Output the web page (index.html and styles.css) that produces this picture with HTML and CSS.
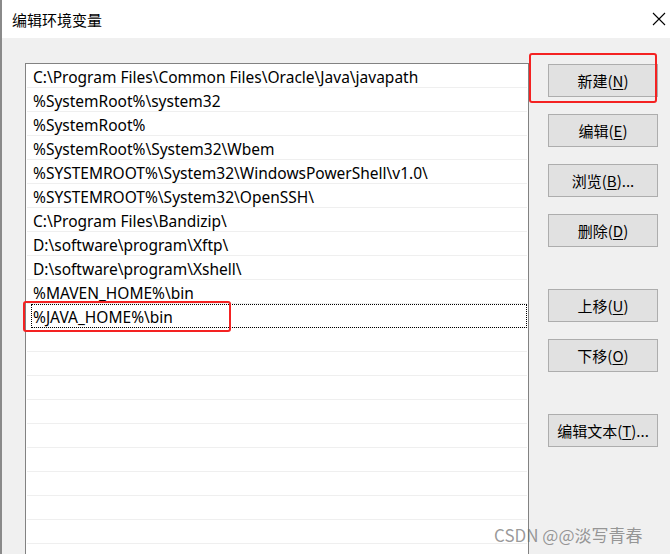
FILE: index.html
```html
<!DOCTYPE html>
<html>
  <head>
    <meta charset="UTF-8" />
    <title>编辑环境变量</title>
    <link rel="stylesheet" href="styles.css">
  </head>
  <body>
    <div class="dialog">
      <!-- 标题栏 -->
      <div class="title-bar">
        <span class="title">编辑环境变量</span>
        <svg class="close" width="14" height="14" viewBox="0 0 14 14">
          <path d="M1 1 L13 13 M13 1 L1 13" stroke="#000" stroke-width="1.1" fill="none" />
        </svg>
      </div>

      <div class="content">
        <div class="path-list">
          <div class="row">C:\Program Files\Common Files\Oracle\Java\javapath</div>
          <div class="row">%SystemRoot%\system32</div>
          <div class="row">%SystemRoot%</div>
          <div class="row">%SystemRoot%\System32\Wbem</div>
          <div class="row">%SYSTEMROOT%\System32\WindowsPowerShell\v1.0\</div>
          <div class="row">%SYSTEMROOT%\System32\OpenSSH\</div>
          <div class="row">C:\Program Files\Bandizip\</div>
          <div class="row">D:\software\program\Xftp\</div>
          <div class="row">D:\software\program\Xshell\</div>
          <div class="row">%MAVEN_HOME%\bin</div>
          <div class="row focused">%JAVA_HOME%\bin</div>
          <div class="row"></div>
          <div class="row"></div>
          <div class="row"></div>
          <div class="row"></div>
          <div class="row"></div>
          <div class="row"></div>
          <div class="row"></div>
          <div class="row"></div>
          <div class="row"></div>
        </div>

        <div class="buttons">
          <div class="btn">新建(<u>N</u>)</div>
          <div class="btn">编辑(<u>E</u>)</div>
          <div class="btn">浏览(<u>B</u>)...</div>
          <div class="btn">删除(<u>D</u>)</div>
          <div class="btn group">上移(<u>U</u>)</div>
          <div class="btn">下移(<u>O</u>)</div>
          <div class="btn group">编辑文本(<u>T</u>)...</div>
        </div>
      </div>
    </div>

    <!-- 标注框 -->
    <div class="mark mark-java"></div>
    <div class="mark mark-new"></div>

    <div class="watermark">CSDN @@淡写青春</div>
  </body>
</html>
```

FILE: styles.css
```css
body {
  margin: 0;
  padding: 0;
  overflow: hidden;
  background: #f0f0f0;
  font-family: "Noto Sans", "Noto Sans CJK SC", sans-serif;
  color: #000;
}

.dialog {
  width: 670px;
  height: 554px;
  border-left: 2px solid #8a8a8a;
  box-sizing: border-box;
}

.title-bar {
  height: 38px;
  background: #fff;
  display: flex;
  align-items: center;
  justify-content: space-between;
  padding: 0 4px 0 10px;
}

.title {
  font-family: "Noto Sans CJK SC", sans-serif;
  font-size: 15px;
}

.close {
  margin-top: -1px;
}

.content {
  display: flex;
  align-items: flex-start;
  padding: 25px 0 0 23px;
}

.path-list {
  width: 504px;
  height: 500px;
  box-sizing: border-box;
  background: #fff;
  border: 1px solid #828282;
  border-bottom: none;
  padding: 0 1px;
}

.row {
  height: 24px;
  box-sizing: border-box;
  border-bottom: 1px solid #efefef;
  padding: 2px 0 0 6px;
  font-size: 15.5px;
  line-height: 22px;
  white-space: nowrap;
}

.row.focused {
  outline: 1px dotted #000;
  outline-offset: -1px;
  margin-left: 4px;
  padding-left: 2px;
}

.buttons {
  display: flex;
  flex-direction: column;
  gap: 17px;
  margin-left: 19px;
  padding-top: 1px;
}

.btn {
  width: 110px;
  height: 33px;
  box-sizing: border-box;
  background: #e1e1e1;
  border: 1px solid #adadad;
  display: flex;
  align-items: center;
  justify-content: center;
  font-family: "Noto Sans CJK SC", sans-serif;
  font-size: 15px;
}

.btn u {
  text-underline-offset: 2px;
}

.btn.group {
  margin-top: 25px;
}

.mark {
  position: absolute;
  border: 2px solid #f42222;
  border-radius: 3px;
}

.mark-java {
  left: 23px;
  top: 301px;
  width: 204px;
  height: 27px;
}

.mark-new {
  left: 529px;
  top: 53px;
  width: 124px;
  height: 46px;
}

.watermark {
  position: absolute;
  left: 494px;
  top: 522px;
  font-family: "Noto Sans CJK SC", sans-serif;
  font-size: 17px;
  color: rgba(110, 110, 110, 0.7);
}
```
